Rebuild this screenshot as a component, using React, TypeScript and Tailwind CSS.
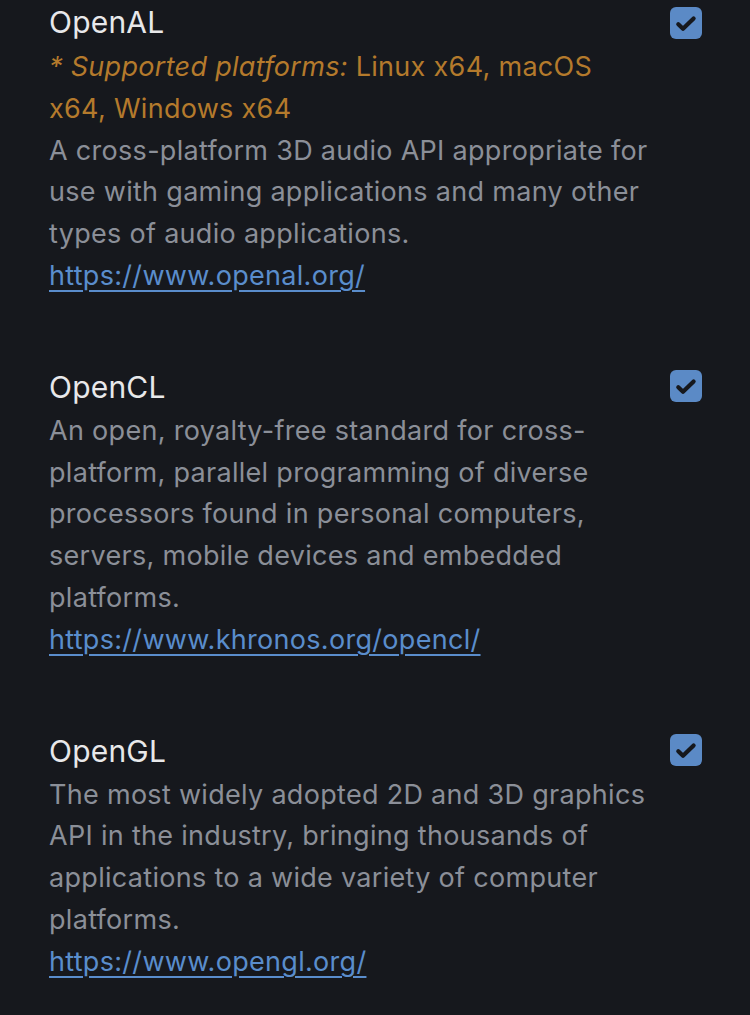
import React from "react";

type Item = {
  title: string;
  platforms?: string;
  desc: string;
  url: string;
};

const items: Item[] = [
  {
    title: "OpenAL",
    platforms: "Linux x64, macOS x64, Windows x64",
    desc: "A cross-platform 3D audio API appropriate for use with gaming applications and many other types of audio applications.",
    url: "https://www.openal.org/",
  },
  {
    title: "OpenCL",
    desc: "An open, royalty-free standard for cross-platform, parallel programming of diverse processors found in personal computers, servers, mobile devices and embedded platforms.",
    url: "https://www.khronos.org/opencl/",
  },
  {
    title: "OpenGL",
    desc: "The most widely adopted 2D and 3D graphics API in the industry, bringing thousands of applications to a wide variety of computer platforms.",
    url: "https://www.opengl.org/",
  },
];

function Check() {
  return (
    <div className="w-8 h-8 rounded-[6px] bg-[#5b8ac6] shrink-0">
      <svg width="32" height="32" viewBox="0 0 32 32" fill="none">
        <path
          d="M8.3 17.3 L13 21.8 L23.6 11.4"
          stroke="#16181d"
          strokeWidth="4.2"
          strokeLinecap="round"
          strokeLinejoin="round"
        />
      </svg>
    </div>
  );
}

export default function App() {
  return (
    <div
      className="min-h-[1015px] bg-[#16181d] pl-[49px] pr-[48px] pt-0"
      style={{ fontFamily: "Inter, 'Noto Sans', sans-serif" }}
    >
      <div className="flex flex-col gap-[68px]">
        {items.map((it, i) => (
          <div key={it.title} className="flex items-start gap-[15px]">
            <div className="w-[606px] shrink-0">
              <div className="text-[30px] leading-[44px] tracking-[0.2px] text-[#e8e8ea] mb-[1px]">{it.title}</div>
              {it.platforms && (
                <div className="mt-[2px] text-[27px] leading-[41.8px] tracking-[0.3px] text-[#b47a2c]">
                  <span className="italic">* Supported platforms:</span> {it.platforms}
                </div>
              )}
              <div className="text-[27px] leading-[41.8px] tracking-[0.3px] text-[#8b8f98]">{it.desc}</div>
              <div className="text-[27px] leading-[41.8px] tracking-[0.3px]">
                <a href="#" className="text-[#5a8dcc] underline underline-offset-[5px] decoration-[2px]">
                  {it.url}
                </a>
              </div>
            </div>
            <div className={i === 0 ? "pt-[7px]" : "pt-[5px]"}>
              <Check />
            </div>
          </div>
        ))}
      </div>
    </div>
  );
}
